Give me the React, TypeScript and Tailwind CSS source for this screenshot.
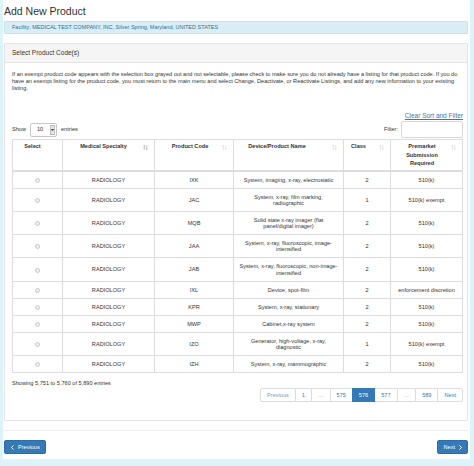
import React from 'react';

type Row = { code: string; name: string; cls: string; sub: string };

const rows: Row[] = [
  { code: 'IXK', name: 'System, imaging, x-ray, electrostatic', cls: '2', sub: '510(k)' },
  { code: 'JAC', name: 'System, x-ray, film marking, radiographic', cls: '1', sub: '510(k) exempt' },
  { code: 'MQB', name: 'Solid state x-ray imager (flat panel/digital imager)', cls: '2', sub: '510(k)' },
  { code: 'JAA', name: 'System, x-ray, fluoroscopic, image-intensified', cls: '2', sub: '510(k)' },
  { code: 'JAB', name: 'System, x-ray, fluoroscopic, non-image-intensified', cls: '2', sub: '510(k)' },
  { code: 'IXL', name: 'Device, spot-film', cls: '2', sub: 'enforcement discretion' },
  { code: 'KPR', name: 'System, x-ray, stationary', cls: '2', sub: '510(k)' },
  { code: 'MWP', name: 'Cabinet,x-ray system', cls: '2', sub: '510(k)' },
  { code: 'IZO', name: 'Generator, high-voltage, x-ray, diagnostic', cls: '1', sub: '510(k) exempt' },
  { code: 'IZH', name: 'System, x-ray, mammographic', cls: '2', sub: '510(k)' },
];

const pages = [
  { label: 'Previous', muted: true },
  { label: '1' },
  { label: '…', muted: true },
  { label: '575' },
  { label: '576', active: true },
  { label: '577' },
  { label: '…', muted: true },
  { label: '589' },
  { label: 'Next' },
];

// little up/down arrows in the header cells
const SortIcon = ({ active }: { active?: boolean }) => {
  const c = active ? '#9a9a9a' : '#d6d6d6';
  return (
    <svg width="5" height="5" viewBox="0 0 10 10" className="absolute right-[6px] top-[5px]">
      <path d="M2.5 9.5V0.8M0.8 2.6L2.5 0.8L4.2 2.6" stroke={c} strokeWidth="1.3" fill="none" />
      <path d="M7.5 0.5V9.2M5.8 7.4L7.5 9.2L9.2 7.4" stroke={c} strokeWidth="1.3" fill="none" />
    </svg>
  );
};

const headers = [
  { label: 'Select', pad: 'pl-[4px] pr-[14px]', icon: false },
  { label: 'Medical Specialty', pad: 'pl-[4px] pr-[14px]', icon: true, active: true },
  { label: 'Product Code', pad: 'pl-[4px] pr-[12px]', icon: true },
  { label: 'Device/Product Name', pad: 'pl-[4px] pr-[27px]', icon: true },
  { label: 'Class', pad: 'pl-[4px] pr-[21px]', icon: true },
  { label: 'Premarket Submission Required', pad: 'pl-[5px] pr-[14px]', icon: true },
];

const App: React.FC = () => {
  return (
    <div className="w-[474px] h-[466px] bg-[#dcf3f9] pl-[3px] pr-[4px] pb-[7px] font-['Liberation_Sans',Arial,sans-serif] text-[#333]">
      <div className="h-full bg-white pl-[1px] pr-[2px] flex flex-col">
        <h1 className="pt-[5px] text-[10.5px] leading-[13px] font-normal">Add New Product</h1>

        <div className="mt-[3px] h-[13px] bg-[#d9edf7] border border-[#c4e3f0] rounded-[1px] pl-[7px] flex items-center text-[5.5px] text-[#31708f]">
          Facility: MEDICAL TEST COMPANY, INC, Silver Spring, Maryland, UNITED STATES
        </div>

        <div className="mt-[9px] border border-[#e3e3e3] rounded-[1px]">
          <div className="h-[19px] bg-[#f5f5f5] border-b border-[#e3e3e3] pl-[7px] flex items-center text-[6.5px]">
            Select Product Code(s)
          </div>

          <div className="pl-[7px] pr-[4px] pt-[8px] pb-[18px] text-[5.6px]">
            <p className="leading-[7px] pr-[1px]">
              If an exempt product code appears with the selection box grayed out and not selectable, please check to make sure you do not already have a listing for that product code. If you do have an exempt listing for the product code, you must return to the main menu and select Change, Deactivate, or Reactivate Listings, and add any new information to your existing listing.
            </p>

            <div className="mt-[20px] flex justify-end">
              <span className="text-[6.5px] leading-[8px] text-[#337ab7] underline">Clear Sort and Filter</span>
            </div>

            <div className="mt-[1px] h-[17px] flex items-center justify-between">
              <div className="flex items-center gap-[4px]">
                <span>Show</span>
                <span className="w-[27px] h-[14px] border border-[#c6c6c6] rounded-[2px] flex items-center justify-between pl-[6px] pr-[1px]">
                  <span>10</span>
                  <span className="w-[5px] h-[10px] bg-[#e4e4e4] border border-[#bdbdbd] flex items-center justify-center">
                    <svg width="3" height="2" viewBox="0 0 6 4">
                      <path d="M0 0H6L3 4Z" fill="#333" />
                    </svg>
                  </span>
                </span>
                <span>entries</span>
              </div>
              <div className="flex items-center gap-[3px]">
                <span>Filter:</span>
                <span className="w-[62px] h-[17px] border border-[#d6d6d6] rounded-[2px] bg-white" />
              </div>
            </div>

            <table className="mt-[1px] w-full table-fixed border-collapse border border-[#ddd]">
              <colgroup>
                <col className="w-[50px]" />
                <col className="w-[92px]" />
                <col className="w-[79px]" />
                <col className="w-[110px]" />
                <col className="w-[47px]" />
                <col />
              </colgroup>
              <thead>
                <tr>
                  {headers.map((h) => (
                    <th
                      key={h.label}
                      className={`relative align-top text-center font-bold border border-[#ddd] border-b-2 pt-[2px] pb-[2px] leading-[8.6px] ${h.pad}`}
                    >
                      {h.label}
                      {h.icon && <SortIcon active={h.active} />}
                    </th>
                  ))}
                </tr>
              </thead>
              <tbody>
                {rows.map((r) => (
                  <tr key={r.code}>
                    <td className="border border-[#ddd] py-[5px] text-center leading-[6.1px]">
                      <span className="inline-block align-middle w-[5px] h-[5px] rounded-full border border-[#c8c8c8] bg-[#efefef]" />
                    </td>
                    <td className="border border-[#ddd] py-[5px] px-[4.5px] text-center leading-[6.1px]">RADIOLOGY</td>
                    <td className="border border-[#ddd] py-[5px] px-[4.5px] text-center leading-[6.1px]">{r.code}</td>
                    <td className="border border-[#ddd] py-[5px] px-[4.5px] text-center leading-[6.1px]">{r.name}</td>
                    <td className="border border-[#ddd] py-[5px] px-[4.5px] text-center leading-[6.1px]">{r.cls}</td>
                    <td className="border border-[#ddd] py-[5px] px-[4.5px] text-center leading-[6.1px]">{r.sub}</td>
                  </tr>
                ))}
              </tbody>
            </table>

            <div className="flex justify-between items-start">
              <div className="pt-[7px] leading-[6.5px]">Showing 5,751 to 5,760 of 5,890 entries</div>
              <div className="mt-[15px] flex">
                {pages.map((p, i) => (
                  <span
                    key={i}
                    className={`h-[14px] px-[6px] flex items-center border -ml-px first:ml-0 first:rounded-l-[2px] last:rounded-r-[2px] ${
                      p.active
                        ? 'bg-[#337ab7] border-[#337ab7] text-white z-10'
                        : p.muted
                        ? 'bg-white border-[#ddd] text-[#8196b0]'
                        : 'bg-white border-[#ddd] text-[#337ab7]'
                    }`}
                  >
                    {p.label}
                  </span>
                ))}
              </div>
            </div>
          </div>
        </div>

        <div className="mt-[9px] border-t border-[#eeeeee]" />

        <div className="mt-[9px] flex justify-between text-[5.6px]">
          <button className="h-[14px] pl-[6px] pr-[5px] flex items-center gap-[4px] bg-[#337ab7] border border-[#2e6da4] rounded-[2px] text-white">
            <svg width="3" height="5" viewBox="0 0 6 10">
              <path d="M5 1L1 5L5 9" stroke="#fff" strokeWidth="2" fill="none" />
            </svg>
            Previous
          </button>
          <button className="h-[14px] pl-[5px] pr-[5px] flex items-center gap-[4px] bg-[#337ab7] border border-[#2e6da4] rounded-[2px] text-white">
            Next
            <svg width="3" height="5" viewBox="0 0 6 10">
              <path d="M1 1L5 5L1 9" stroke="#fff" strokeWidth="2" fill="none" />
            </svg>
          </button>
        </div>
      </div>
    </div>
  );
};

export default App;
